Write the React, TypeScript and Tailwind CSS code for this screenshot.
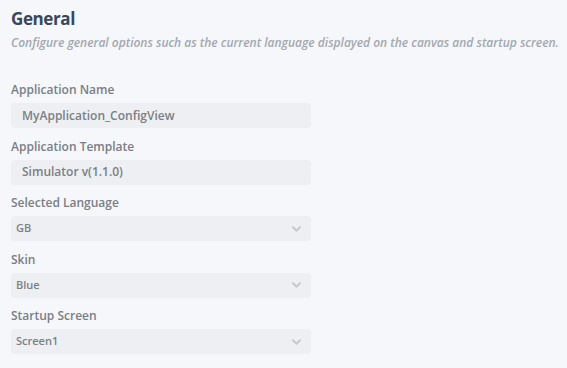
import React from "react";

const Chevron = () => (
  <svg width="9" height="6" viewBox="0 0 9 6" className="shrink-0">
    <path d="M1 1.2l3.5 3.5 3.5-3.5" fill="none" stroke="#c6c9ce" strokeWidth="2" strokeLinecap="round" strokeLinejoin="round" />
  </svg>
);

const Label = ({ children }: { children: React.ReactNode }) => (
  <div className="text-[12px] leading-[16px] text-[#7a7e86] font-semibold h-[16px]">{children}</div>
);

const TextField = ({ label, value }: { label: string; value: string }) => (
  <div className="flex flex-col">
    <Label>{label}</Label>
    <div className="mt-[5px] w-[300px] h-[25px] rounded-[4px] bg-[#edeff2] flex items-center pl-[11px] text-[12px] text-[#7b7f86] font-semibold">
      {value}
    </div>
  </div>
);

const SelectField = ({ label, value }: { label: string; value: string }) => (
  <div className="flex flex-col">
    <Label>{label}</Label>
    <div className="mt-[5px] w-[300px] h-[25px] rounded-[4px] bg-[#edeff2] flex items-center justify-between pl-[5px] pr-[10px] text-[11px] text-[#7b7f86] font-semibold">
      <span>{value}</span>
      <Chevron />
    </div>
  </div>
);

export default function App() {
  return (
    <div
      className="w-[567px] h-[368px] bg-[#f5f7fa] overflow-hidden px-[11px] pt-[7px]"
      style={{ fontFamily: '"Open Sans", "Noto Sans", sans-serif' }}
    >
      <h1 className="text-[17px] leading-[24px] font-bold text-[#3a475a] tracking-[-0.4px]">General</h1>
      <p className="mt-[4px] text-[12px] leading-[16px] italic font-semibold text-[#a3a8b0] whitespace-nowrap">
        Configure general options such as the current language displayed on the canvas and startup screen.
      </p>
      <div className="mt-[31px] flex flex-col gap-[10.5px]">
        <TextField label="Application Name" value="MyApplication_ConfigView" />
        <TextField label="Application Template" value="Simulator v(1.1.0)" />
        <SelectField label="Selected Language" value="GB" />
        <SelectField label="Skin" value="Blue" />
        <SelectField label="Startup Screen" value="Screen1" />
      </div>
    </div>
  );
}
